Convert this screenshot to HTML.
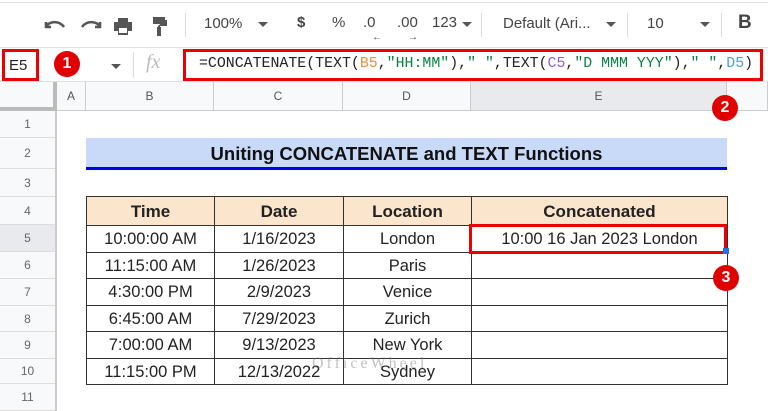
<!DOCTYPE html>
<html><head><meta charset="utf-8"><style>
*{box-sizing:border-box;margin:0;padding:0}
body{width:768px;height:411px;overflow:hidden;background:#fff;font-family:"Liberation Sans",Arial,sans-serif;position:relative}
.a{position:absolute}
.tb{color:#444;font-size:15px}
.circ{position:absolute;width:26px;height:26px;border-radius:50%;background:#e10000;color:#fff;font-size:16px;font-weight:bold;text-align:center;line-height:26px}
.rh{position:absolute;left:0;width:55px;text-align:center;color:#666;font-size:12px;border-bottom:1px solid #ddd;background:#f8f9fa}
.ch{position:absolute;top:82px;height:29px;text-align:center;color:#555;font-size:12px;line-height:29px;border-right:1px solid #ccc;background:#f8f9fa;border-bottom:1px solid #ccc}
table{position:absolute;left:86px;top:196px;border-collapse:collapse;font-size:16.5px;color:#222}
td{border:1.5px solid #333;text-align:center;padding:2px 0 0 0;height:26.5px}
tr.h td{background:#fce5cd;font-weight:bold;font-size:17px;height:29px}
</style></head><body>
<div class="a" style="left:0;top:0;width:768px;height:3px;border-bottom:1px solid #e0e0e0"></div>
<svg class="a" style="left:40px;top:12px" width="140" height="26" viewBox="0 0 140 26">
<path d="M6 10 L6 15 L11 15 M6 15 C9 9 19 8 24 15" stroke="#555" stroke-width="2.6" fill="none"/>
<path d="M60 10 L60 15 L55 15 M60 15 C57 9 47 8 42 15" stroke="#555" stroke-width="2.6" fill="none"/>
<path d="M78 6h10v4h-10z M74 10h18v9h-4v4h-10v-4h-4z" fill="#555"/><rect x="79" y="16" width="8" height="5" fill="#fff"/>
<path d="M113 5h12v7h-12z M125 8h2v6h-7v3h-2v-3" fill="#555"/><rect x="117" y="15" width="4" height="9" fill="#555"/>
</svg>
<div class="a" style="left:185px;top:13px;width:1px;height:24px;background:#ddd"></div>
<div class="a tb" style="left:204px;top:15px">100%</div>
<div class="a" style="left:258px;top:22px;border:5px solid transparent;border-top:5px solid #555"></div>
<div class="a tb" style="left:297px;top:14px;font-weight:bold">$</div>
<div class="a tb" style="left:332px;top:14px">%</div>
<div class="a tb" style="left:363px;top:14px">.0</div>
<div class="a" style="left:372px;top:32px;font-size:10px;color:#444">←</div>
<div class="a tb" style="left:397px;top:14px">.00</div>
<div class="a" style="left:408px;top:32px;font-size:10px;color:#444">→</div>
<div class="a tb" style="left:432px;top:14px">123</div>
<div class="a" style="left:462px;top:22px;border:5px solid transparent;border-top:5px solid #555"></div>
<div class="a" style="left:481px;top:13px;width:1px;height:24px;background:#ddd"></div>
<div class="a tb" style="left:503px;top:15px">Default (Ari...</div>
<div class="a" style="left:606px;top:22px;border:5px solid transparent;border-top:5px solid #555"></div>
<div class="a" style="left:627px;top:13px;width:1px;height:24px;background:#ddd"></div>
<div class="a tb" style="left:647px;top:15px">10</div>
<div class="a" style="left:700px;top:22px;border:5px solid transparent;border-top:5px solid #555"></div>
<div class="a" style="left:721px;top:13px;width:1px;height:24px;background:#ddd"></div>
<div class="a" style="left:738px;top:12px;font-size:19px;font-weight:bold;color:#444">B</div>
<div class="a" style="left:0;top:47px;width:768px;height:35px;border-top:1px solid #e0e0e0;border-bottom:1px solid #e0e0e0"></div>
<div class="a" style="left:2px;top:49px;width:37px;height:32px;border:3px solid #e00;font-size:15px;color:#222;padding:5px 0 0 4px">E5</div>
<div class="circ" style="left:54px;top:51px">1</div>
<div class="a" style="left:111px;top:64px;border:5px solid transparent;border-top:5px solid #555"></div>
<div class="a" style="left:133px;top:52px;width:1px;height:26px;background:#ddd"></div>
<div class="a" style="left:146px;top:51px;font-family:'Liberation Serif',serif;font-style:italic;font-size:20px;color:#bbb">fx</div>
<div class="a" style="left:183px;top:49px;width:580px;height:32px;border:3px solid #e00"></div>
<div class="a" style="left:199px;top:56px;font-family:'Liberation Mono',monospace;font-size:14.9px;color:#222;white-space:pre">=CONCATENATE(TEXT(<span style="color:#e69138">B5</span>,<span style="color:#0b8043">"HH:MM"</span>),<span style="color:#0b8043">" "</span>,TEXT(<span style="color:#8e63ce">C5</span>,<span style="color:#0b8043">"D MMM YYY"</span>),<span style="color:#0b8043">" "</span>,<span style="color:#4aa3c7">D5</span>)</div>
<div class="a" style="left:0;top:82px;width:57px;height:29px;background:#f8f9fa;border-right:4px solid #bbb;border-bottom:4px solid #bbb"></div>
<div class="ch" style="left:57px;width:29px">A</div>
<div class="ch" style="left:86px;width:128px">B</div>
<div class="ch" style="left:214px;width:129px">C</div>
<div class="ch" style="left:343px;width:128px">D</div>
<div class="ch" style="left:471px;width:256px;background:#e8eaed">E</div>
<div class="ch" style="left:727px;width:41px"></div>
<div class="a" style="left:55px;top:111px;width:2px;height:300px;background:#ccc"></div>
<div class="rh" style="top:111px;height:27px;line-height:27px">1</div>
<div class="rh" style="top:138px;height:31px;line-height:31px">2</div>
<div class="rh" style="top:169px;height:28px;line-height:28px">3</div>
<div class="rh" style="top:197px;height:28px;line-height:28px">4</div>
<div class="rh" style="top:225px;height:27px;line-height:27px;background:#e8eaed">5</div>
<div class="rh" style="top:252px;height:27px;line-height:27px">6</div>
<div class="rh" style="top:279px;height:27px;line-height:27px">7</div>
<div class="rh" style="top:306px;height:26px;line-height:26px">8</div>
<div class="rh" style="top:332px;height:27px;line-height:27px">9</div>
<div class="rh" style="top:359px;height:25px;line-height:25px">10</div>
<div class="rh" style="top:384px;height:27px;line-height:27px">11</div>
<div class="a" style="left:86px;top:138px;width:641px;height:29px;background:#c9daf8;text-align:center;font-weight:bold;font-size:18.5px;line-height:31px;color:#111">Uniting CONCATENATE and TEXT Functions</div>
<div class="a" style="left:86px;top:167px;width:641px;height:3px;background:#0000ee"></div>
<table>
<colgroup><col style="width:128px"><col style="width:129px"><col style="width:128px"><col style="width:256px"></colgroup>
<tr class="h"><td>Time</td><td>Date</td><td>Location</td><td>Concatenated</td></tr>
<tr><td>10:00:00 AM</td><td>1/16/2023</td><td>London</td><td>10:00 16 Jan 2023 London</td></tr>
<tr><td>11:15:00 AM</td><td>1/26/2023</td><td>Paris</td><td></td></tr>
<tr><td>4:30:00 PM</td><td>2/9/2023</td><td>Venice</td><td></td></tr>
<tr><td>6:45:00 AM</td><td>7/29/2023</td><td>Zurich</td><td></td></tr>
<tr><td>7:00:00 AM</td><td>9/13/2023</td><td>New York</td><td></td></tr>
<tr><td>11:15:00 PM</td><td>12/13/2022</td><td>Sydney</td><td></td></tr>
</table>
<div class="a" style="left:469px;top:224px;width:258px;height:30px;border:3px solid #e00"></div>
<div class="a" style="left:723px;top:248px;width:6px;height:6px;background:#1a73e8"></div>
<div class="a" style="left:312px;top:355px;font-family:'Liberation Serif',serif;font-size:16px;color:rgba(120,120,120,0.45);letter-spacing:3px">OfficeWheel</div>
<div class="circ" style="left:712px;top:95px">2</div>
<div class="circ" style="left:713px;top:265px">3</div>
</body></html>
